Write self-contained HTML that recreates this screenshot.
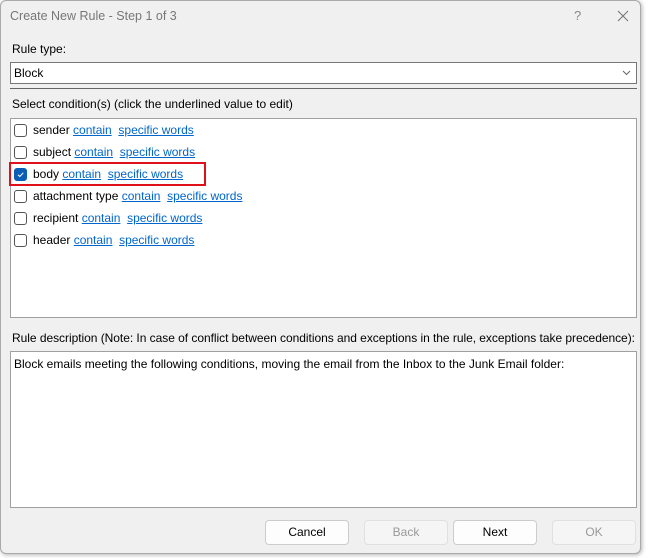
<!DOCTYPE html>
<html><head><style>
body{margin:0;width:648px;height:558px;background:#fff;position:relative;overflow:hidden;font-family:"Liberation Sans",sans-serif;font-size:12px;color:#000}
.dlg{position:absolute;left:0;top:0;width:641px;height:554px;background:#f0f0f0;border:1px solid #aaa;border-radius:6px;box-sizing:border-box;box-shadow:1px 1px 4px rgba(0,0,0,.3)}
.a{position:absolute;white-space:nowrap}
.box{position:absolute;background:#fff;border:1px solid #a0a0a0;box-sizing:border-box}
.row{position:absolute;left:14px;height:14px;line-height:14px}
.cb{position:absolute;left:0;top:1px;width:13px;height:13px;border:1px solid #555;border-radius:3px;background:#fff;box-sizing:border-box}
.t{margin-left:19px}
a{color:#0066cc;text-decoration:underline}
.btn{position:absolute;top:520px;width:84px;height:25px;border:1px solid #ccc;border-radius:4px;background:#fdfdfd;box-sizing:border-box;text-align:center;line-height:23px}
.dis{color:#999;background:#f5f5f5;border-color:#e0e0e0}
</style></head><body>
<div class="dlg"></div>
<div class="a" style="left:10px;top:9px;color:#777;font-size:12.5px">Create New Rule - Step 1 of 3</div>
<div class="a" style="left:574px;top:8px;color:#888;font-size:13px">?</div>
<svg class="a" style="left:617px;top:10px" width="12" height="12"><path d="M1 1L11 11M11 1L1 11" stroke="#777" stroke-width="1.1"/></svg>
<div class="a" style="left:12px;top:42px">Rule type:</div>
<div class="box" style="left:10px;top:62px;width:627px;height:22px;border-color:#777"></div>
<div class="a" style="left:14px;top:66px">Block</div>
<svg class="a" style="left:622px;top:70px" width="9" height="6"><path d="M1 1L4.5 4.5L8 1" stroke="#666" fill="none"/></svg>
<div class="a" style="left:10px;top:88px;width:627px;height:1px;background:#666"></div>
<div class="a" style="left:12px;top:97px">Select condition(s) (click the underlined value to edit)</div>
<div class="box" style="left:10px;top:118px;width:627px;height:200px"></div>
<div class="row" style="top:123px"><span class="cb"></span><span class="t">sender <a>contain</a>&nbsp; <a>specific words</a></span></div>
<div class="row" style="top:145px"><span class="cb"></span><span class="t">subject <a>contain</a>&nbsp; <a>specific words</a></span></div>
<div class="row" style="top:167px"><span class="cb" style="background:#0a5fb4;border-color:#0a5fb4"><svg width="11" height="11" style="position:absolute;left:0;top:0"><path d="M3 5.8L4.8 7.5L8.3 3.8" stroke="#fff" fill="none" stroke-width="1"/></svg></span><span class="t">body <a>contain</a>&nbsp; <a>specific words</a></span></div>
<div class="row" style="top:189px"><span class="cb"></span><span class="t">attachment type <a>contain</a>&nbsp; <a>specific words</a></span></div>
<div class="row" style="top:211px"><span class="cb"></span><span class="t">recipient <a>contain</a>&nbsp; <a>specific words</a></span></div>
<div class="row" style="top:233px"><span class="cb"></span><span class="t">header <a>contain</a>&nbsp; <a>specific words</a></span></div>
<div class="a" style="left:9px;top:162px;width:197px;height:24px;border:2px solid #e0101a;box-sizing:border-box"></div>
<div class="a" style="left:12px;top:331px;letter-spacing:-0.04px">Rule description (Note: In case of conflict between conditions and exceptions in the rule, exceptions take precedence):</div>
<div class="box" style="left:10px;top:351px;width:627px;height:157px"></div>
<div class="a" style="left:14px;top:357px">Block emails meeting the following conditions, moving the email from the Inbox to the Junk Email folder:</div>
<div class="btn" style="left:265px">Cancel</div>
<div class="btn dis" style="left:364px">Back</div>
<div class="btn" style="left:453px">Next</div>
<div class="btn dis" style="left:552px">OK</div>
</body></html>
